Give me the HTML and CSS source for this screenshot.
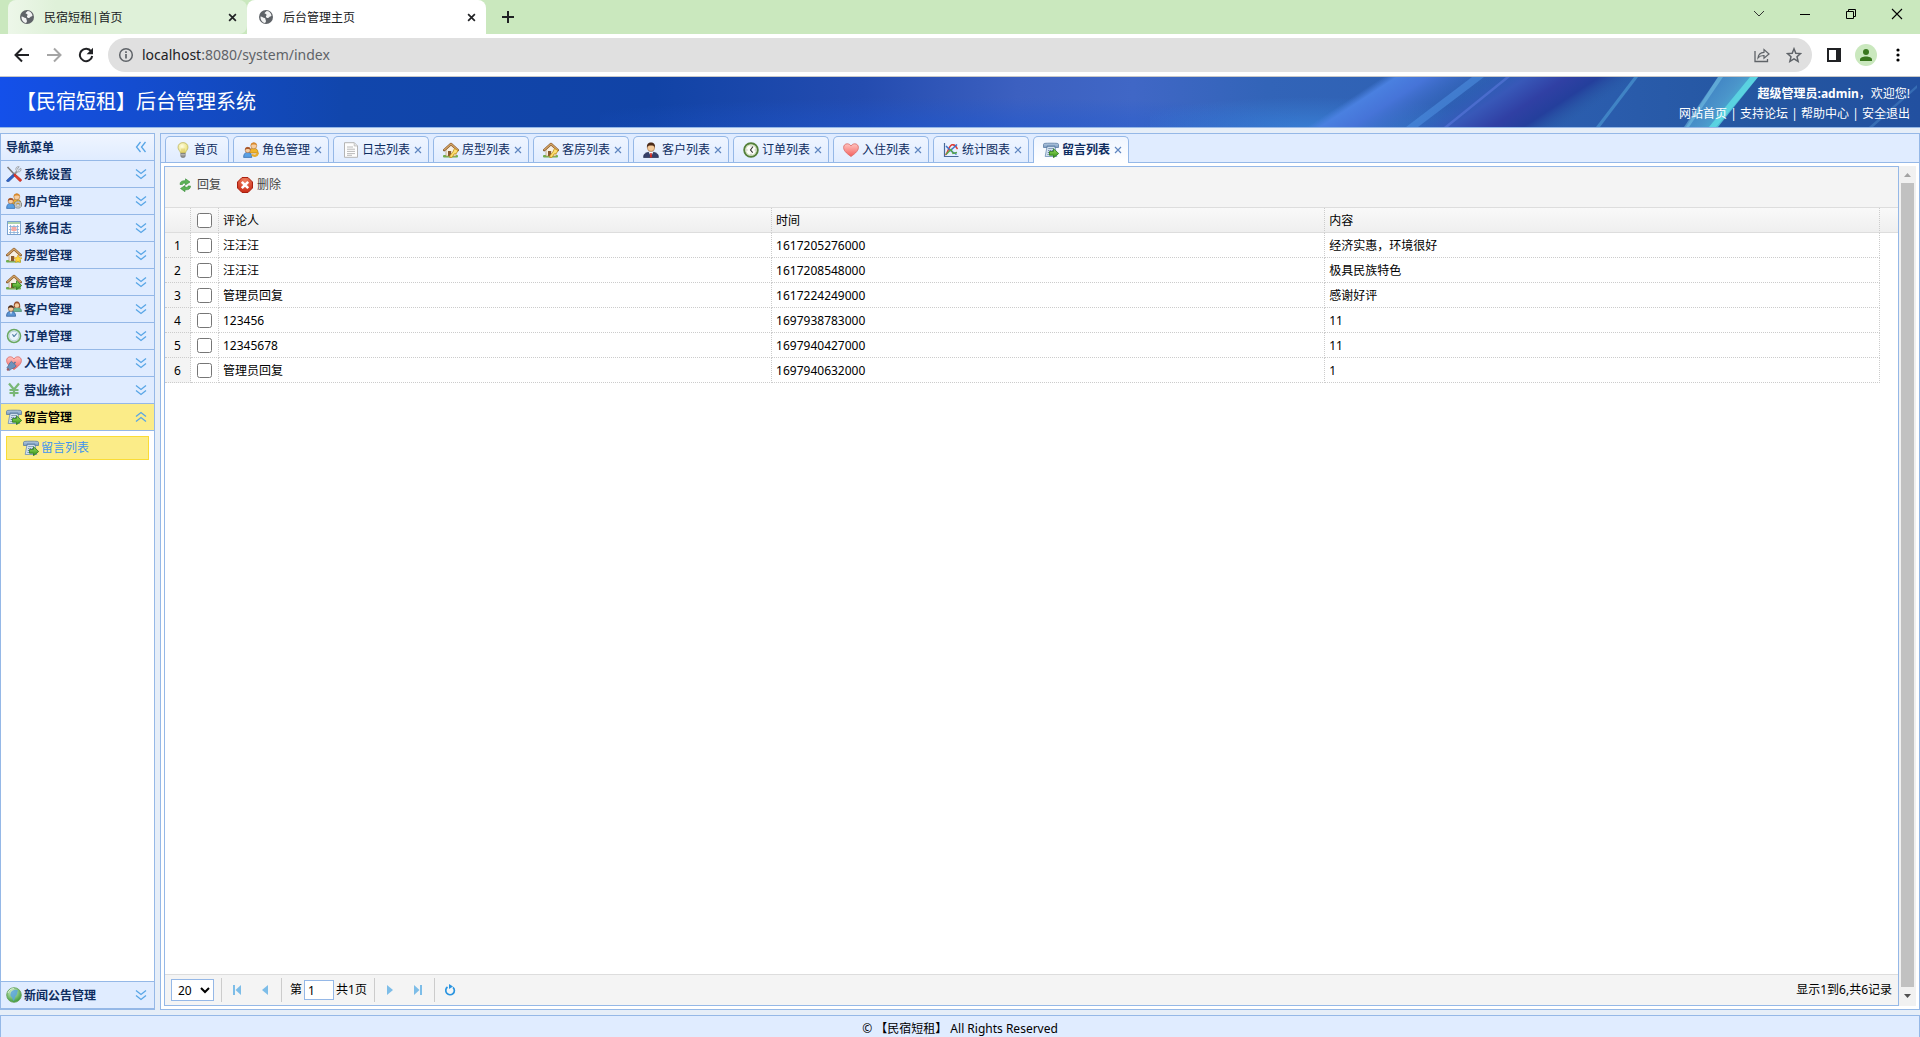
FILE: index.html
```html
<!DOCTYPE html>
<html lang="zh-CN">
<head>
<meta charset="utf-8">
<title>后台管理主页</title>
<link rel="stylesheet" href="styles.css">
</head>
<body>
<svg class="sprite" aria-hidden="true">
  <defs>
    <linearGradient id="g-heart" x1="0" y1="0" x2="0" y2="1"><stop offset="0" stop-color="#ffc4c0"/><stop offset="1" stop-color="#f4605e"/></linearGradient>
    <linearGradient id="g-arrow" x1="0" y1="0" x2="0" y2="1"><stop offset="0" stop-color="#9be05a"/><stop offset="1" stop-color="#2f8f1c"/></linearGradient>
    <radialGradient id="g-globe" cx=".4" cy=".3" r=".7"><stop offset="0" stop-color="#d8f3d0"/><stop offset="1" stop-color="#3f9c3a"/></radialGradient>
    <radialGradient id="g-bulb" cx=".4" cy=".35" r=".7"><stop offset="0" stop-color="#fffde0"/><stop offset="1" stop-color="#e6dc6a"/></radialGradient>
    <radialGradient id="g-red" cx=".5" cy=".2" r=".9"><stop offset="0" stop-color="#f08060"/><stop offset="1" stop-color="#c4200c"/></radialGradient>
    <linearGradient id="g-phone" x1="0" y1="0" x2="0" y2="1"><stop offset="0" stop-color="#b4c9e0"/><stop offset="1" stop-color="#7c9cc0"/></linearGradient>
    <path id="p-heart" d="M8 14.500C3 11 .6 8.400 .6 5.500.6 3.300 2.200 1.800 4.200 1.800c1.600 0 3 .8 3.800 2.200.8-1.400 2.200-2.200 3.800-2.200 2 0 3.600 1.500 3.600 3.700C15.400 8.400 13 11 8 14.500z"/>
    <path id="p-arrow" d="M6.500 9.500h4V6.800l5.200 4.700-5.200 4.200v-2.500h-4z" fill="url(#g-arrow)" stroke="#2c7a1c" stroke-width=".8"/>
    <g id="p-house"><rect x="0" y="13" width="15" height="2.500" rx="1" fill="#6fae4c"/><path d="M3 7.500 8 3l5 4.500V14H3z" fill="#f6efe2" stroke="#b69a72" stroke-width=".7"/><rect x="5" y="9" width="3.200" height="5" fill="#8a5a2e"/><path d="M1.200 8.200 8 2l6.800 6.200" fill="none" stroke="#8a5a2a" stroke-width="2.400" stroke-linejoin="round" stroke-linecap="round"/><path d="M1.200 8 8 1.900 14.800 8" fill="none" stroke="#d2a468" stroke-width="1.300" stroke-linejoin="round"/></g>
    <g id="p-pair"><path d="M6.500 11V8.500C7 7 8.500 6.300 10.800 6.300c2.700 0 4.200 1.400 4.200 4.700z" fill="#f0b428" stroke="#b47c18" stroke-width=".7"/><circle cx="10.800" cy="3.800" r="3" fill="#f6cda0" stroke="#b57a3a" stroke-width=".6"/><path d="M7.700 3.600C7.900 1 9.300.4 10.800.4s2.900.6 3.100 3.200c-1-1.500-5.200-1.500-6.200 0z" fill="#d8892c"/><path d="M.6 15.400c0-3.600 1.400-5 4-5s4.200 1.400 4.200 5z" fill="#5aa0e4" stroke="#2f66a8" stroke-width=".7"/><circle cx="4.800" cy="8" r="2.700" fill="#f6cda0" stroke="#a8663a" stroke-width=".6"/><path d="M2 8c.1-2.400 1.400-3 2.800-3s2.700.6 2.800 3c-1-1.500-4.600-1.500-5.600 0z" fill="#a8562c"/></g>
    <symbol id="i-tools" viewBox="0 0 16 16"><path d="m1.500 1 7 7.500" stroke="#777" stroke-width="1.500"/><path d="M.8 14 8 7.300l1.700 1.900-7 6.600C1.200 16.200 0 15 .8 14z" fill="#2e62c4" stroke="#1d4690" stroke-width=".5"/><path d="M8 8.500l3-3" stroke="#999" stroke-width="2.200"/><path d="M14.800 2.200 12.500 4 11.400 3 13.200.7C10.800.2 9.200 2 10 4.300l1.600 1.500c2.500.6 4.100-1.300 3.200-3.600z" fill="#dde2e8" stroke="#8a8f98" stroke-width=".7"/><path d="m8.800 7.800 6.600 5.700c.6 1.100-.8 2.600-1.900 1.800L7.500 9.200z" fill="#e33a2c" stroke="#a81c14" stroke-width=".5"/></symbol>
    <symbol id="i-usergear" viewBox="0 0 16 16"><use href="#p-pair"/><circle cx="12" cy="11.500" r="2.800" fill="none" stroke="#777" stroke-width="2.700" stroke-dasharray="1.700 .6"/><circle cx="12" cy="11.500" r="2.600" fill="none" stroke="#c4c4bc" stroke-width="1.500"/></symbol>
    <symbol id="i-calendar" viewBox="0 0 16 16"><rect x="1.500" y="1.500" width="13" height="13" fill="#fff" stroke="#7aa2d0"/><path d="M2 3h12" stroke="#8cc08c" stroke-width="1.400"/><path d="M3 6.500h10M3 9.500h10M3 12.500h10M4.500 5v9M8 5v9M11.500 5v9" stroke="#88acd4" stroke-width=".8"/><rect x="5.500" y="7" width="5" height="4" fill="#f5aaa4"/></symbol>
    <symbol id="i-housestar" viewBox="0 0 16 16"><use href="#p-house"/><path d="m12 8 1.200 2.600 2.800.3-2.100 1.900.6 2.800L12 14.200l-2.500 1.400.6-2.800L8 10.900l2.800-.3z" fill="#fcd83c" stroke="#d89c18" stroke-width=".6"/></symbol>
    <symbol id="i-housearrow" viewBox="0 0 16 16"><use href="#p-house"/><use href="#p-arrow"/></symbol>
    <symbol id="i-housekey" viewBox="0 0 16 16"><use href="#p-house"/><path d="m11.500 6.500 3.500 2-1.800 3.200-2 .2-2 3.300-2.400.5.2-2.200 2.800-3.300z" fill="#fce070" stroke="#c08c14" stroke-width=".8"/></symbol>
    <symbol id="i-couple" viewBox="0 0 16 16"><path d="M7 10.500c0-3 1.500-4 4-4s4.500 1 4.500 4z" fill="#6cb490" stroke="#3a7a5a" stroke-width=".6"/><path d="M7.700 6.800C7.400 2.200 8.800.5 10.900.5s3.600 1.700 3.300 6.300z" fill="#98502c"/><circle cx="10.900" cy="4.500" r="2.200" fill="#f6cda0"/><path d="M.5 15.300c0-3.600 1.700-5 4.500-5s4.600 1.400 4.600 5z" fill="#5a94d4" stroke="#2f5c98" stroke-width=".7"/><path d="m4 10.500 1 3 1-3z" fill="#fff"/><circle cx="5" cy="7.700" r="2.700" fill="#f6cda0" stroke="#80502c" stroke-width=".6"/><path d="M2.100 7.700C2 5 3.500 4.300 5 4.300s3 .7 2.900 3.400c-1-1.700-4.800-1.700-5.800 0z" fill="#4a2c1a"/></symbol>
    <symbol id="i-clock" viewBox="0 0 16 16"><circle cx="8" cy="8" r="6.500" fill="#f5faf5" stroke="#69a862" stroke-width="1.600"/><circle cx="8" cy="8" r="4.900" fill="#eaf3fb" stroke="#98bcc8" stroke-width=".7"/><path d="M8 8.700 10.700 5.500M8 8.700 6.500 6.200" stroke="#4878a0" stroke-width="1.100" fill="none"/></symbol>
    <symbol id="i-clock2" viewBox="0 0 16 16"><circle cx="8" cy="8" r="6.800" fill="#fafaf4" stroke="#54803a" stroke-width="1.900"/><circle cx="8" cy="8" r="5.300" fill="#fdfdf8" stroke="#a9c48c" stroke-width=".6"/><path d="M10 4.500 7.500 8l2.200 2.600" stroke="#333" stroke-width="1.100" fill="none"/><path d="M8 3.500v1M8 11.800v1M3.500 8h1M11.700 8h1" stroke="#888" stroke-width=".7"/></symbol>
    <symbol id="i-heart" viewBox="0 0 16 16"><use href="#p-heart" fill="url(#g-heart)" stroke="#d86864" stroke-width=".8"/></symbol>
    <symbol id="i-heartbell" viewBox="0 0 16 16"><use href="#p-heart" fill="url(#g-heart)" stroke="#d86864" stroke-width=".8"/><path d="M.8 12.600C3 11.500 2.500 8 5.500 6.300l4.700 4.500C8.800 13.800 5 13 3.600 15.500z" fill="#6b93bd" stroke="#486c94" stroke-width=".7"/><circle cx="2" cy="14.500" r="1.300" fill="#9a5a64"/><path d="m8 8.500 1.500-1.600" stroke="#54779c" stroke-width="1.500"/></symbol>
    <symbol id="i-yen" viewBox="0 0 16 16"><path d="m3 1.500 5 6 5-6M8 7v7.500M3.500 8h9M3.500 11h9" fill="none" stroke="#79b776" stroke-width="2.200"/></symbol>
    <symbol id="i-phone" viewBox="0 0 16 16"><path d="M4 4.500h8l1.800 10H2.200z" fill="#d3e1ef" stroke="#6d8fb4" stroke-width=".8"/><path d="M.5 2.500C.5 1.200 2 1.200 8 1.200s7.500 0 7.500 1.300v3H12V4H4v1.500H.5z" fill="url(#g-phone)" stroke="#5a7ca4" stroke-width=".8"/><path d="M5.500 6.500h5M5.200 8.500h5.500M4.800 10.500h3M4.500 12.500h3" stroke="#5f7d9c" stroke-dasharray="1.200 .7"/><use href="#p-arrow"/></symbol>
    <symbol id="i-globe" viewBox="0 0 16 16"><circle cx="8" cy="8" r="7.300" fill="url(#g-globe)" stroke="#68a45c" stroke-width=".9"/><path d="M5 5c2-2 5-3 7-1.500-.4 1.500-1 2-.8 3.500L9.500 9.500 8 14c-2-1-1-3.500-3-4.500-1-1-.5-3 0-4.500z" fill="#5aa5dc" opacity=".85"/><path d="M2 6c1-3 3-4.500 6-4.500" stroke="#fff" fill="none" opacity=".6"/></symbol>
    <symbol id="i-bulb" viewBox="0 0 16 16"><path d="M8 .6c3 0 5 2 5 4.700 0 2.500-2.200 3.700-2.600 5.900H5.600C5.200 9 3 7.800 3 5.300 3 2.600 5 .6 8 .6z" fill="url(#g-bulb)" stroke="#b8b060" stroke-width=".7"/><path d="M7 11V6.500M9 11V6.500" stroke="#d4b848" stroke-width=".7"/><path d="M5.800 11.300h4.400v3.200L9 15.600H7l-1.200-1.100z" fill="#8c8c8c" stroke="#666" stroke-width=".5"/><path d="M6 12.800h4" stroke="#ddd" stroke-width=".7"/></symbol>
    <symbol id="i-users" viewBox="0 0 16 16"><use href="#p-pair"/><path d="M9 12.500c2 2 5.500 1.500 6-2" stroke="#e8ac2c" stroke-width="2.400" fill="none"/></symbol>
    <symbol id="i-page" viewBox="0 0 16 16"><path d="M1.500 .7h9.800l3.200 3.200v11.400h-13z" fill="#fdfdfd" stroke="#b4b4b4"/><path d="M11.200.7v3.300h3.300" fill="#e4e4e4" stroke="#b4b4b4" stroke-width=".7"/><path d="M4 5h6M4 7.200h8M4 9.400h8M4 11.600h8M4 13.300h5" stroke="#a8a8a8" stroke-width=".8"/></symbol>
    <symbol id="i-person" viewBox="0 0 16 16"><path d="M.6 15.500c0-3.900 2-5.300 7.400-5.300s7.400 1.400 7.400 5.300z" fill="#35406a" stroke="#222b4c" stroke-width=".7"/><path d="m5.800 10 2.200 5 2.200-5z" fill="#fff"/><path d="M7.300 11h1.400l.5 4.500H6.800z" fill="#d02c24"/><circle cx="8" cy="5.800" r="3.600" fill="#f4cb9c" stroke="#a8703c" stroke-width=".6"/><path d="M4 6C3.600 2 5.300.6 8 .6S12.400 2 12 6c-.7-2.600-2-2.600-4-2.600S4.700 3.400 4 6z" fill="#4a2a18"/></symbol>
    <symbol id="i-chart" viewBox="0 0 16 16"><path d="M1.500 1v13.500h14" fill="none" stroke="#486a98" stroke-width="1.200"/><path d="M2.500 13C5 11 5.500 4 9 2.800c3-.8 4 1.500 5.500 4.400" fill="none" stroke="#de3c34" stroke-width="1.500"/><path d="m3 4 4.500 4.500L14 2.500M7.500 8.500l6 4" fill="none" stroke="#3d75cc" stroke-width="1.500"/><path d="m3 12.500 5-5 2 4 4-1" fill="none" stroke="#58a848" stroke-width="1.400"/></symbol>
    <symbol id="i-sync" viewBox="0 0 16 16"><path d="M3 7.500C3 4.500 5 3.500 8.500 3.700V1.800L13 5 8.500 8V6.200C6 6 5.500 6.500 5.500 7.500z" fill="#5cb456" stroke="#358a38" stroke-width=".6"/><path d="M13.500 9c0 3-2 4-5.500 3.800v1.900l-4.500-3.200L8 8.500v1.800c2.500.2 3-.3 3-1.300z" fill="#5cb456" stroke="#358a38" stroke-width=".6"/></symbol>
    <symbol id="i-delete" viewBox="0 0 16 16"><path d="M5 .5h6L15.500 5v6L11 15.500H5L.5 11V5z" fill="url(#g-red)" stroke="#a82010"/><path d="m4.800 4.800 6.400 6.400m0-6.400-6.400 6.400" stroke="#fff" stroke-width="2.600"/></symbol>
    <symbol id="i-down" viewBox="0 0 12 12"><path d="M1 1.500l5 4 5-4M1 6.500l5 4 5-4" fill="none" stroke="currentColor" stroke-width="1.300"/></symbol>
    <symbol id="i-up" viewBox="0 0 12 12"><path d="M1 5.500l5-4 5 4M1 10.500l5-4 5 4" fill="none" stroke="currentColor" stroke-width="1.300"/></symbol>
    <symbol id="i-left" viewBox="0 0 12 12"><path d="M5.500 1l-4 5 4 5M10.500 1l-4 5 4 5" fill="none" stroke="currentColor" stroke-width="1.300"/></symbol>
    <symbol id="i-web" viewBox="0 0 16 16"><circle cx="8" cy="8" r="7" fill="#5f6368"/><path d="M2.500 7.500c2 .2 2.500 1.500 4.200 1.500 1.300.4.500 2 1.200 2.500.3.800-.2 2-.9 2.500-3-.5-4.700-3.500-4.500-6.500zM8.500 2c2.500 0 4.500 2 5 4.500-.5 1.500-2 .5-2.500 2-.8 1-2.500.3-3-.6-.4-1 .8-1.400.5-2.400-.6-.8-2-.3-1.800-1.500C7 3 8 3.200 8.500 2z" fill="#fff" opacity=".92"/></symbol>
    <symbol id="i-x" viewBox="0 0 8 8"><path d="m1 1 6 6m0-6L1 7" stroke="currentColor" fill="none" stroke-width="1.500"/></symbol>
    <symbol id="i-tabx" viewBox="0 0 8 8"><path d="m1 1 6 6m0-6L1 7" stroke="currentColor" fill="none" stroke-width="1.200"/></symbol>
  </defs>
</svg>

<header class="browser">
  <div class="tabstrip">
    <div class="btab btab-idle"><svg class="icon"><use href="#i-web"/></svg><span>民宿短租|首页</span><button class="plain bclose" aria-label="关闭"><svg><use href="#i-x"/></svg></button></div>
    <div class="btab btab-on"><svg class="icon"><use href="#i-web"/></svg><span>后台管理主页</span><button class="plain bclose" aria-label="关闭"><svg><use href="#i-x"/></svg></button></div>
    <button class="plain newtab" aria-label="新标签页"><svg width="12" height="12"><path d="M6 0v12M0 6h12" stroke="#202124" stroke-width="2"/></svg></button>
    <div class="winbtns">
      <button class="plain" aria-label="搜索标签页"><svg width="12" height="12"><path d="m1 3 5 5 5-5" fill="none" stroke="#333"/></svg></button>
      <button class="plain" aria-label="最小化"><svg width="12" height="12"><path d="M1 6.500h10" stroke="#000"/></svg></button>
      <button class="plain" aria-label="还原"><svg width="12" height="12"><path d="M1.500 3.500h7v7h-7zM3.500 3.500v-2h7v7h-2" fill="none" stroke="#000"/></svg></button>
      <button class="plain" aria-label="关闭窗口"><svg width="12" height="12"><path d="m1 1 10 10m0-10L1 11" stroke="#000" stroke-width="1.100"/></svg></button>
    </div>
  </div>
  <div class="toolbar">
    <button class="plain nav" aria-label="后退"><svg width="16" height="16"><path d="M15 8H2m6-6.500L1.500 8 8 14.500" fill="none" stroke="#202124" stroke-width="2"/></svg></button>
    <button class="plain nav" aria-label="前进"><svg width="16" height="16"><path d="M1 8h13M8 1.500 14.500 8 8 14.500" fill="none" stroke="#a5a5a5" stroke-width="2"/></svg></button>
    <button class="plain nav" aria-label="刷新"><svg width="16" height="16"><path d="M13.200 4.500A6.200 6.200 0 1 0 14.200 9" fill="none" stroke="#202124" stroke-width="2"/><path d="M15 .8v6.400H8.600z" fill="#202124"/></svg></button>
    <div class="address">
      <svg width="16" height="16"><circle cx="8" cy="8" r="6.300" fill="none" stroke="#5f6368" stroke-width="1.500"/><path d="M8 7v4.500M8 4.300v1.600" stroke="#5f6368" stroke-width="1.700"/></svg>
      <div class="url" role="textbox" aria-label="地址">localhost<span>:8080/system/index</span></div>
      <button class="plain addrbtn" aria-label="分享"><svg width="16" height="16"><path d="M1 4v10.500h12.500V12" fill="none" stroke="#5f6368" stroke-width="1.300"/><path d="M4 11c.3-4 2.500-5.500 6-5.700V2.500L15 7l-5 4.200V8.500C7.500 8.400 5.500 9 4 11z" fill="none" stroke="#5f6368" stroke-width="1.200"/></svg></button>
      <button class="plain addrbtn" aria-label="收藏"><svg width="16" height="16"><path d="m8 1.800 1.800 4.400 4.700.4L11 9.700l1.100 4.600L8 11.800l-4.100 2.500L5 9.700 1.500 6.600l4.700-.4z" fill="none" stroke="#5f6368" stroke-width="1.500"/></svg></button>
    </div>
    <div class="extras">
      <button class="plain" aria-label="侧边栏"><svg width="14" height="14"><path d="M1 1h12v12H1z" fill="#fff" stroke="#202124" stroke-width="2"/><path d="M9 0h5v14H9z" fill="#202124"/></svg></button>
      <button class="plain" aria-label="用户"><svg width="22" height="22"><circle cx="11" cy="11" r="11" fill="#cae8be"/><circle cx="11" cy="8" r="3" fill="#38761d"/><path d="M5 17v-1.500c0-2 3-3 6-3s6 1 6 3V17z" fill="#38761d"/></svg></button>
      <button class="plain" aria-label="菜单"><svg width="4" height="14"><circle cx="2" cy="2" r="1.600"/><circle cx="2" cy="7" r="1.600"/><circle cx="2" cy="12" r="1.600"/></svg></button>
    </div>
  </div>
</header>

<div class="banner">
  <svg class="banner-art" viewBox="0 0 1920 50" preserveAspectRatio="none" aria-hidden="true">
    <defs>
      <linearGradient id="sky" x1="0" x2="1"><stop offset="0" stop-color="#1450ea"/><stop offset=".07" stop-color="#144dd0"/><stop offset=".18" stop-color="#1146ac"/><stop offset=".34" stop-color="#1143a6"/><stop offset=".45" stop-color="#244cb0"/><stop offset=".53" stop-color="#3c60c0"/><stop offset=".59" stop-color="#4067c6"/><stop offset=".66" stop-color="#3264b8"/><stop offset=".73" stop-color="#2f62b4"/><stop offset=".84" stop-color="#2a5cac"/><stop offset=".92" stop-color="#2456a0"/><stop offset="1" stop-color="#2250a0"/></linearGradient>
      <radialGradient id="glow1" cx=".5" cy="1" r=".6"><stop offset="0" stop-color="#1e58d0" stop-opacity=".8"/><stop offset="1" stop-color="#1e58d0" stop-opacity="0"/></radialGradient>
      <radialGradient id="glow2" cx=".5" cy="1" r=".6"><stop offset="0" stop-color="#3b86dc" stop-opacity=".7"/><stop offset="1" stop-color="#3b86dc" stop-opacity="0"/></radialGradient>
      <linearGradient id="s1" gradientUnits="userSpaceOnUse" x1="1383" y1="0" x2="1417" y2="52"><stop offset="0" stop-color="#4a80e0" stop-opacity="0"/><stop offset=".12" stop-color="#4a80e0"/><stop offset=".4" stop-color="#4674d8"/><stop offset="1" stop-color="#3463b8" stop-opacity="0"/></linearGradient>
      <linearGradient id="s2" gradientUnits="userSpaceOnUse" x1="1480" y1="0" x2="1528" y2="73"><stop offset="0" stop-color="#2c5cb8" stop-opacity="0"/><stop offset=".3" stop-color="#3858b8"/><stop offset=".55" stop-color="#3040a4"/><stop offset=".75" stop-color="#243f9c"/><stop offset="1" stop-color="#285aa4" stop-opacity="0"/></linearGradient>
      <linearGradient id="s3" gradientUnits="userSpaceOnUse" x1="1718" y1="0" x2="1742" y2="20"><stop offset="0" stop-color="#4890cc"/><stop offset=".6" stop-color="#54a4d4"/><stop offset="1" stop-color="#50c0dc"/></linearGradient>
    </defs>
    <rect width="1920" height="50" fill="url(#sky)"/>
    <rect x="600" width="700" height="50" fill="url(#glow1)" opacity=".7"/>
    <rect x="1150" width="320" height="50" fill="url(#glow2)"/>
    <path d="M1380 0h120l-76 50h-120z" fill="url(#s1)"/>
    <path d="M1480 0h160l-76 50h-160z" fill="url(#s2)"/>
    <path d="M1472 0h12l-66 50h-12z" fill="#4d8ee0" opacity=".6"/>
    <path d="M1506 0h4l-62 50h-4z" fill="#5a78dc" opacity=".6"/>
    <path d="M1634 0h4l-38 50h-4z" fill="#4a94d0" opacity=".7"/>
    <path d="M1718 0h40l-42 50h-30z" fill="url(#s3)" opacity=".8"/>
    <path d="M1750 0h8l-40 50h-9z" fill="#62e6e8" opacity=".7"/>
    <path d="M1718 0h5l-34 50h-5z" fill="#7ccae8" opacity=".5"/>
    <path d="M1917 8v3l-44 39h-4z" fill="#4a88c8" opacity=".5"/>
  </svg>
  <h1>【民宿短租】后台管理系统</h1>
  <div class="account">
    <p><b>超级管理员:admin</b>，欢迎您!</p>
    <p class="links"><a href="#">网站首页</a><i>|</i><a href="#">支持论坛</a><i>|</i><a href="#">帮助中心</a><i>|</i><a href="#">安全退出</a></p>
  </div>
</div>

<div class="workspace">
  <nav class="sidebar">
    <div class="side-title"><span>导航菜单</span><svg class="tool"><use href="#i-left"/></svg></div>
    <button class="side-item"><svg class="icon"><use href="#i-tools"/></svg><span>系统设置</span><svg class="tool"><use href="#i-down"/></svg></button>
    <button class="side-item"><svg class="icon"><use href="#i-usergear"/></svg><span>用户管理</span><svg class="tool"><use href="#i-down"/></svg></button>
    <button class="side-item"><svg class="icon"><use href="#i-calendar"/></svg><span>系统日志</span><svg class="tool"><use href="#i-down"/></svg></button>
    <button class="side-item"><svg class="icon"><use href="#i-housestar"/></svg><span>房型管理</span><svg class="tool"><use href="#i-down"/></svg></button>
    <button class="side-item"><svg class="icon"><use href="#i-housearrow"/></svg><span>客房管理</span><svg class="tool"><use href="#i-down"/></svg></button>
    <button class="side-item"><svg class="icon"><use href="#i-couple"/></svg><span>客户管理</span><svg class="tool"><use href="#i-down"/></svg></button>
    <button class="side-item"><svg class="icon"><use href="#i-clock"/></svg><span>订单管理</span><svg class="tool"><use href="#i-down"/></svg></button>
    <button class="side-item"><svg class="icon"><use href="#i-heartbell"/></svg><span>入住管理</span><svg class="tool"><use href="#i-down"/></svg></button>
    <button class="side-item"><svg class="icon"><use href="#i-yen"/></svg><span>营业统计</span><svg class="tool"><use href="#i-down"/></svg></button>
    <button class="side-item side-open"><svg class="icon"><use href="#i-phone"/></svg><span>留言管理</span><svg class="tool"><use href="#i-up"/></svg></button>
    <div class="side-body"><a class="side-link" href="#"><svg class="icon"><use href="#i-phone"/></svg>留言列表</a></div>
    <button class="side-item side-last"><svg class="icon"><use href="#i-globe"/></svg><span>新闻公告管理</span><svg class="tool"><use href="#i-down"/></svg></button>
  </nav>

  <main class="center">
    <div class="tabs">
      <div class="tab tab-home"><svg class="icon"><use href="#i-bulb"/></svg><span>首页</span></div>
      <div class="tab"><svg class="icon"><use href="#i-users"/></svg><span>角色管理</span><button class="plain tabx" aria-label="关闭"><svg><use href="#i-tabx"/></svg></button></div>
      <div class="tab"><svg class="icon"><use href="#i-page"/></svg><span>日志列表</span><button class="plain tabx" aria-label="关闭"><svg><use href="#i-tabx"/></svg></button></div>
      <div class="tab"><svg class="icon"><use href="#i-housekey"/></svg><span>房型列表</span><button class="plain tabx" aria-label="关闭"><svg><use href="#i-tabx"/></svg></button></div>
      <div class="tab"><svg class="icon"><use href="#i-housekey"/></svg><span>客房列表</span><button class="plain tabx" aria-label="关闭"><svg><use href="#i-tabx"/></svg></button></div>
      <div class="tab"><svg class="icon"><use href="#i-person"/></svg><span>客户列表</span><button class="plain tabx" aria-label="关闭"><svg><use href="#i-tabx"/></svg></button></div>
      <div class="tab"><svg class="icon"><use href="#i-clock2"/></svg><span>订单列表</span><button class="plain tabx" aria-label="关闭"><svg><use href="#i-tabx"/></svg></button></div>
      <div class="tab"><svg class="icon"><use href="#i-heart"/></svg><span>入住列表</span><button class="plain tabx" aria-label="关闭"><svg><use href="#i-tabx"/></svg></button></div>
      <div class="tab"><svg class="icon"><use href="#i-chart"/></svg><span>统计图表</span><button class="plain tabx" aria-label="关闭"><svg><use href="#i-tabx"/></svg></button></div>
      <div class="tab tab-on"><svg class="icon"><use href="#i-phone"/></svg><span>留言列表</span><button class="plain tabx" aria-label="关闭"><svg><use href="#i-tabx"/></svg></button></div>
    </div>
    <div class="frame">
      <section class="grid">
        <div class="grid-tools">
          <button class="plain"><svg class="icon"><use href="#i-sync"/></svg>回复</button>
          <button class="plain"><svg class="icon"><use href="#i-delete"/></svg>删除</button>
        </div>
        <div class="grid-view">
          <table>
            <colgroup><col class="c-num"><col class="c-check"><col class="c-text"><col class="c-text"><col></colgroup>
            <thead><tr><th></th><th class="ck"><input type="checkbox" aria-label="全选"></th><th>评论人</th><th>时间</th><th>内容</th></tr></thead>
            <tbody>
              <tr><td class="num">1</td><td class="ck"><input type="checkbox" aria-label="选择第1行"></td><td>汪汪汪</td><td>1617205276000</td><td>经济实惠，环境很好</td></tr>
              <tr><td class="num">2</td><td class="ck"><input type="checkbox" aria-label="选择第2行"></td><td>汪汪汪</td><td>1617208548000</td><td>极具民族特色</td></tr>
              <tr><td class="num">3</td><td class="ck"><input type="checkbox" aria-label="选择第3行"></td><td>管理员回复</td><td>1617224249000</td><td>感谢好评</td></tr>
              <tr><td class="num">4</td><td class="ck"><input type="checkbox" aria-label="选择第4行"></td><td>123456</td><td>1697938783000</td><td>11</td></tr>
              <tr><td class="num">5</td><td class="ck"><input type="checkbox" aria-label="选择第5行"></td><td>12345678</td><td>1697940427000</td><td>11</td></tr>
              <tr><td class="num">6</td><td class="ck"><input type="checkbox" aria-label="选择第6行"></td><td>管理员回复</td><td>1697940632000</td><td>1</td></tr>
            </tbody>
          </table>
        </div>
        <div class="pager">
          <select aria-label="每页条数"><option>20</option></select>
          <i class="sep"></i>
          <button class="plain" aria-label="首页"><svg width="10" height="10"><path d="M1 0h2v10H1zM9 0v10L3.500 5z" fill="#7dbde8"/></svg></button>
          <button class="plain" aria-label="上一页"><svg width="10" height="10"><path d="M8 0v10L2 5z" fill="#7dbde8"/></svg></button>
          <i class="sep"></i>
          <label class="page-label" for="page">第</label><input id="page" class="page-input" type="text" value="1"><span class="page-total">共1页</span>
          <i class="sep"></i>
          <button class="plain" aria-label="下一页"><svg width="10" height="10"><path d="M2 0v10l6-5z" fill="#7dbde8"/></svg></button>
          <button class="plain" aria-label="末页"><svg width="10" height="10"><path d="M1 0v10l5.500-5zM7 0h2v10H7z" fill="#7dbde8"/></svg></button>
          <i class="sep"></i>
          <button class="plain" aria-label="刷新"><svg width="12" height="12"><path d="M3.500 3A4.300 4.300 0 1 0 9 3.300" fill="none" stroke="#2a94e0" stroke-width="1.700"/><path d="M5 0l4 2.500L5 5z" fill="#2a94e0"/></svg></button>
          <span class="summary">显示1到6,共6记录</span>
        </div>
      </section>
      <div class="scrollbar" aria-hidden="true">
        <svg width="17" height="17"><path d="M5 11h7L8.500 7z" fill="#a3a3a3"/></svg>
        <div class="thumb"></div>
        <svg width="17" height="19"><path d="M5 7h7l-3.500 4z" fill="#505050"/></svg>
      </div>
    </div>
  </main>
</div>

<footer class="footer">© 【民宿短租】 All Rights Reserved</footer>
</body>
</html>
```
FILE: styles.css
```css
* { box-sizing: border-box; }

body {
  margin: 0;
  height: 100vh;
  display: flex;
  flex-direction: column;
  overflow: hidden;
  background: #e6eef8;
  color: #000;
  font: 12px/18px "Noto Sans", "Noto Sans CJK SC", sans-serif;
}

p, h1 { margin: 0; }
i { font-style: normal; }
svg { display: block; flex: none; }
.sprite { position: absolute; width: 0; height: 0; }
.icon { width: 16px; height: 16px; }

.plain {
  display: flex;
  align-items: center;
  justify-content: center;
  padding: 0;
  border: 0;
  background: none;
  color: inherit;
  font: inherit;
}

/* Browser window */
.browser { border-bottom: 1px solid #c8c8c8; background: #fff; }
.tabstrip { display: flex; height: 34px; padding-left: 8px; background: #cae8be; }
.btab {
  display: flex;
  align-items: center;
  width: 239px;
  padding: 0 8px 0 11px;
  border-radius: 8px 8px 0 0;
  color: #202124;
}
.btab span { flex: 1; margin-left: 9px; padding-top: 2px; }
.btab-idle { background: linear-gradient(90deg, #edf7e9, #dff1d9 20%); border-bottom-right-radius: 8px; }
.btab-on { background: #fff; }
.bclose { width: 14px; height: 14px; }
.bclose svg { width: 9px; height: 9px; }
.newtab { width: 44px; }
.winbtns { display: flex; align-items: center; margin-left: auto; height: 28px; }
.winbtns button { width: 46px; height: 28px; }

.toolbar { display: flex; align-items: center; height: 42px; padding-left: 6px; }
.nav { width: 32px; height: 34px; }
.address {
  flex: 1;
  display: flex;
  align-items: center;
  height: 34px;
  margin-left: 6px;
  padding: 0 2px 0 10px;
  border-radius: 17px;
  background: #e0e0e0;
}
.url { flex: 1; margin-left: 8px; font-size: 14px; color: #202124; }
.url span { color: #5f6368; }
.addrbtn { width: 32px; height: 32px; }
.extras { display: flex; padding: 0 6px; }
.extras button { width: 32px; height: 32px; }

/* Page banner */
.banner {
  position: relative;
  display: flex;
  align-items: center;
  justify-content: space-between;
  height: 51px;
  padding: 0 10px 0 16px;
  border-bottom: 1px solid #95b8e7;
  background: #1450c8;
  color: #fff;
}
.banner-art { position: absolute; inset: 0; width: 100%; height: 100%; }
.banner h1 { position: relative; font-size: 20px; font-weight: 400; line-height: 30px; }
.account { position: relative; padding-top: 4px; line-height: 20px; text-align: right; }
.account a { color: #fff; text-decoration: none; }
.links i { display: inline-block; width: 13px; text-align: center; }

/* Work area */
.workspace { flex: 1; display: flex; gap: 5px; min-height: 0; padding: 5px 0; }

.sidebar {
  display: flex;
  flex-direction: column;
  width: 155px;
  border: 1px solid #95b8e7;
  background: #fff;
}
.side-title, .side-item {
  display: flex;
  align-items: center;
  width: 100%;
  height: 27px;
  padding: 0 7px 0 5px;
  border: 0;
  border-bottom: 1px solid #95b8e7;
  background: #e0ecff;
  color: #0e2d5f;
  font: inherit;
  font-weight: 700;
  text-align: left;
}
.side-title { background: linear-gradient(#eff5ff, #e0ecff); }
.side-title span, .side-item span { flex: 1; margin-left: 2px; padding-top: 2px; }
.side-title span { margin-left: 0; }
.tool { width: 12px; height: 12px; color: #57a5e6; }
.side-open { background: #fbec88; color: #000; }
.side-last { border-top: 1px solid #95b8e7; height: 28px; }
.side-body { flex: 1; padding: 5px; }
.side-link {
  display: flex;
  align-items: center;
  gap: 2px;
  height: 24px;
  padding-left: 16px;
  border: 1px solid #fadc35;
  background: #fbec88;
  color: #3f94f0;
  text-decoration: none;
}

.center {
  flex: 1;
  display: flex;
  flex-direction: column;
  min-width: 0;
  border: 1px solid #95b8e7;
  background: #fff;
}
.tabs {
  display: flex;
  gap: 4px;
  height: 29px;
  padding: 2px 4px 0;
  border-bottom: 1px solid #95b8e7;
  background: #e0ecff;
}
.tab {
  display: flex;
  align-items: center;
  width: 96px;
  height: 26px;
  padding: 0 5px 0 9px;
  border: 1px solid #95b8e7;
  border-bottom: 0;
  border-radius: 5px 5px 0 0;
  background: linear-gradient(#eff5ff, #e0ecff);
  color: #0e2d5f;
}
.tab span { flex: 1; margin-left: 3px; }
.tab-home { width: 64px; }
.tab-on { height: 27px; background: linear-gradient(#eff5ff, #fff); font-weight: 700; }
.tabx { width: 10px; height: 16px; color: #5f86c0; }
.tabx svg { width: 8px; height: 8px; }

.frame { flex: 1; display: flex; min-height: 0; padding: 3px; }
.grid {
  flex: 1;
  display: flex;
  flex-direction: column;
  min-width: 0;
  border: 1px solid #95b8e7;
}
.grid-tools {
  display: flex;
  gap: 16px;
  height: 41px;
  padding: 4px 12px;
  border-bottom: 1px solid #ddd;
  background: #f4f4f4;
  color: #444;
}
.grid-tools button { height: 28px; gap: 4px; }
.grid-view {
  flex: 1;
  min-height: 0;
  padding-right: 18px;
  background:
    linear-gradient(#f9f9f9, #efefef) top / 100% 24px no-repeat,
    linear-gradient(#ddd, #ddd) top / 100% 25px no-repeat,
    #fff;
}
.grid table { width: 100%; table-layout: fixed; border-spacing: 0; }
.c-num { width: 26px; }
.c-check { width: 28px; }
.c-text { width: 32.25%; }
.grid th, .grid td {
  height: 25px;
  padding: 2px 4px 0;
  border-right: 1px dotted #ccc;
  border-bottom: 1px dotted #ccc;
  font-weight: 400;
  text-align: left;
}
.grid th { border-bottom: 1px solid #ddd; }
.grid td.num { padding: 2px 0 0; background: #f4f4f4; text-align: center; }
.grid .ck { padding: 0 6px; }
.ck input { display: block; width: 15px; height: 15px; margin: 0; }

.pager {
  display: flex;
  align-items: center;
  height: 31px;
  padding: 0 6px;
  border-top: 1px solid #ddd;
  background: #f4f4f4;
}
.pager select {
  width: 43px;
  height: 22px;
  margin-right: 5px;
  padding: 0 0 0 2px;
  border: 1px solid #95b8e7;
  background: #fff;
  font: inherit;
}
.pager button { width: 28px; height: 26px; }
.sep { width: 1px; height: 24px; margin: 0 2px; background: #ccc; }
.sep + button { margin-left: -1px; }
.page-label { margin-left: 6px; }
.page-input {
  width: 30px;
  height: 20px;
  margin: 0 2px;
  padding: 0 3px;
  border: 1px solid #95b8e7;
  font: inherit;
}
.page-total { margin-right: 5px; }
.summary { margin-left: auto; }

.scrollbar {
  display: flex;
  flex-direction: column;
  width: 17px;
  background: #f1f1f1;
}
.thumb { flex: 1; margin: 0 2px; background: #c1c1c1; }

.footer {
  height: 22px;
  padding-top: 4px;
  border: 1px solid #95b8e7;
  border-bottom: 0;
  background: #e0ecff;
  line-height: 18px;
  text-align: center;
}
```
